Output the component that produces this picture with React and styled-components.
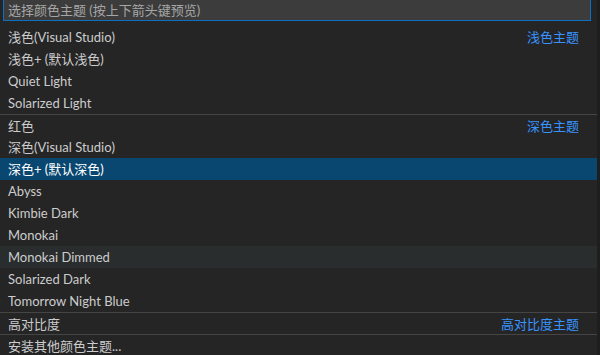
import React from 'react';
import styled, { createGlobalStyle } from 'styled-components';

const GlobalStyle = createGlobalStyle`
  html, body {
    margin: 0;
    padding: 0;
    background: #1e1e1e;
    overflow: hidden;
  }
  body {
    font-family: Lato, "Noto Sans CJK SC", sans-serif;
  }
`;

const Page = styled.div`
  width: 600px;
  height: 355px;
  display: flex;
  background: #1e1e1e;
`;

const Picker = styled.div`
  width: 597px;
  height: 355px;
  background: #252526;
  overflow: hidden;
  display: flex;
  flex-direction: column;
`;

const InputWrap = styled.div`
  padding: 0 6px 5px 3px;
  margin-top: -1px;
`;

const Input = styled.input`
  box-sizing: border-box;
  width: 100%;
  height: 22px;
  background: #3c3c3c;
  border: 1px solid #0e70c0;
  outline: none;
  color: #cccccc;
  font-family: Lato, "Noto Sans CJK SC", sans-serif;
  font-size: 13px;
  padding: 0 4px;

  &::placeholder {
    color: #a6a6a6;
  }
`;

const List = styled.div`
  display: flex;
  flex-direction: column;
`;

const Row = styled.div`
  box-sizing: border-box;
  height: 22px;
  line-height: 20px;
  display: flex;
  align-items: center;
  justify-content: space-between;
  padding: 0 18px 0 8px;
  font-size: 13px;
  color: ${(p) => (p.$selected ? '#ffffff' : '#cccccc')};
  background: ${(p) => (p.$selected ? '#094771' : p.$hover ? '#2a2d2e' : 'transparent')};
  border-top: ${(p) => (p.$separator ? '1px solid #454545' : 'none')};
  white-space: nowrap;
`;

const Label = styled.span``;

const Group = styled.span`
  color: #3794ff;
`;

const items = [
  { label: '浅色(Visual Studio)', group: '浅色主题' },
  { label: '浅色+ (默认浅色)' },
  { label: 'Quiet Light' },
  { label: 'Solarized Light' },
  { label: '红色', group: '深色主题', separator: true },
  { label: '深色(Visual Studio)' },
  { label: '深色+ (默认深色)', selected: true },
  { label: 'Abyss' },
  { label: 'Kimbie Dark' },
  { label: 'Monokai' },
  { label: 'Monokai Dimmed', hover: true },
  { label: 'Solarized Dark' },
  { label: 'Tomorrow Night Blue' },
  { label: '高对比度', group: '高对比度主题', separator: true },
  { label: '安装其他颜色主题...', separator: true },
];

export default function App() {
  return (
    <Page>
      <GlobalStyle />
      <Picker>
        <InputWrap>
          <Input placeholder="选择颜色主题 (按上下箭头键预览)" />
        </InputWrap>
        <List>
          {items.map((it) => (
            <Row
              key={it.label}
              $selected={it.selected}
              $hover={it.hover}
              $separator={it.separator}
            >
              <Label>{it.label}</Label>
              {it.group && <Group>{it.group}</Group>}
            </Row>
          ))}
        </List>
      </Picker>
    </Page>
  );
}
